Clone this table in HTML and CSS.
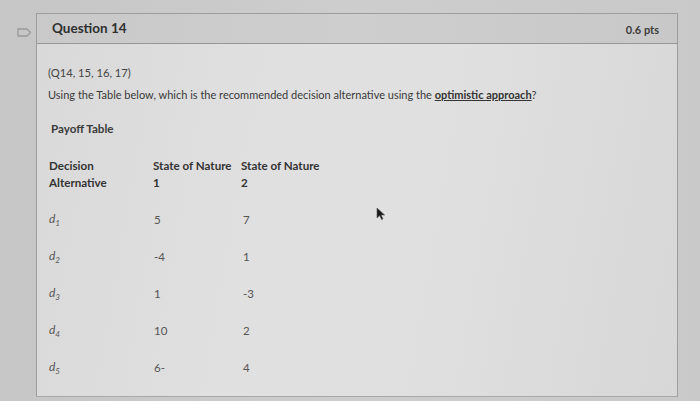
FILE: index.html
```html
<!DOCTYPE html>
<html>
<head>
<meta charset="utf-8">
<link rel="stylesheet" href="styles.css">
</head>
<body>
<div class="page">
  <div class="flag">
    <svg width="15" height="9" viewBox="0 0 15 9"><path d="M1 1 H10 L13.5 4.5 L10 8 H1 Z" fill="none" stroke="#9a9a9a" stroke-width="1.3" stroke-linejoin="round"/></svg>
  </div>
  <div class="card">
    <div class="card-header">
      <span class="q-title">Question 14</span>
      <span class="q-pts">0.6 pts</span>
    </div>
    <div class="card-body">
      <p class="q-ref">(Q14, 15, 16, 17)</p>
      <p class="q-text">Using the Table below, which is the recommended decision alternative using the <span class="q-link">optimistic approach</span>?</p>
      <p class="q-caption">Payoff Table</p>
      <div class="payoff">
        <div class="ph ph-first">Decision<br>Alternative</div>
        <div class="ph">State of Nature<br>1</div>
        <div class="ph">State of Nature<br><span class="ph-num">2</span></div>

        <div class="dc">d<sub>1</sub></div><div class="v1">5</div><div class="v2">7</div>
        <div class="dc">d<sub>2</sub></div><div class="v1">-4</div><div class="v2">1</div>
        <div class="dc">d<sub>3</sub></div><div class="v1">1</div><div class="v2">-3</div>
        <div class="dc">d<sub>4</sub></div><div class="v1">10</div><div class="v2">2</div>
        <div class="dc">d<sub>5</sub></div><div class="v1">6-</div><div class="v2">4</div>
      </div>
    </div>
  </div>
  <svg class="cursor" width="10" height="14" viewBox="0 0 10 14"><path d="M1 1 L1 11 L3.6 8.6 L5.6 12.6 L7 12 L5.1 8 L8.6 8 Z" fill="#1a1a1a" stroke="#555" stroke-width="0.6"/></svg>
</div>
</body>
</html>
```
FILE: styles.css
```css
html, body {
  margin: 0;
  padding: 0;
}
body {
  width: 700px;
  height: 401px;
  overflow: hidden;
  font-family: Lato, "Open Sans", sans-serif;
  color: #333;
}
.page {
  position: relative;
  height: 401px;
  box-sizing: border-box;
  padding: 13px 22px 0 36px;
  background: linear-gradient(90deg, #c6c6c6 0%, #cdcdcd 50%, #c9c9c9 100%);
}
.flag {
  position: absolute;
  left: 17px;
  top: 21px;
}
.card {
  height: 384px;
  box-sizing: border-box;
  border: 1px solid #9d9d9d;
  border-bottom-color: #a8a8a8;
  background: linear-gradient(100deg, #d9d9d9 0%, #e0e0e0 35%, #e0e0e0 60%, #d7d7d7 100%);
}
.card-header {
  height: 30px;
  box-sizing: border-box;
  display: flex;
  align-items: center;
  justify-content: space-between;
  padding: 0 18px 0 15px;
  background: linear-gradient(90deg, #c9c9c9 0%, #cecece 50%, #c8c8c8 100%);
  border-bottom: 1px solid #979797;
}
.q-title {
  font-size: 13.5px;
  font-weight: 700;
  color: #2f2f2f;
  margin-top: -1px;
}
.q-pts {
  font-size: 11px;
  font-weight: 700;
  color: #3d3d3d;
  margin-top: 2px;
}
.card-body {
  padding: 22px 0 0 11px;
}
.card-body p {
  margin: 0;
  font-size: 11.2px;
  line-height: 14px;
}
.q-ref {
  color: #444;
}
.card-body .q-text {
  margin-top: 8px;
  font-size: 11px;
  color: #3a3a3a;
}
.q-link {
  font-weight: 700;
  color: #333;
  text-decoration: underline;
  text-underline-offset: 1px;
}
.card-body .q-caption {
  margin-top: 20px;
  padding-left: 3px;
  font-size: 11.6px;
  font-weight: 700;
  color: #3a3a3a;
}
.payoff {
  margin-top: 21px;
  display: grid;
  grid-template-columns: 105px 88px 100px;
  grid-auto-rows: 37px;
  grid-template-rows: 35px;
  align-items: center;
  font-size: 11.6px;
}
.ph {
  font-weight: 700;
  line-height: 17px;
  color: #333;
  align-self: start;
}
.ph-first {
  padding-left: 1px;
}
.ph-num {
  padding-left: 0;
}
.dc {
  font-style: italic;
  font-size: 12px;
  color: #555;
  padding-left: 1px;
  transform: translateY(9px);
}
.dc sub {
  font-size: 8px;
  vertical-align: -3px;
}
.v1, .v2 {
  color: #555;
  font-size: 11.5px;
  transform: translateY(9px);
}
.v1 {
  padding-left: 1px;
}
.v2 {
  padding-left: 2px;
}
.cursor {
  position: absolute;
  left: 376px;
  top: 207px;
}
```
